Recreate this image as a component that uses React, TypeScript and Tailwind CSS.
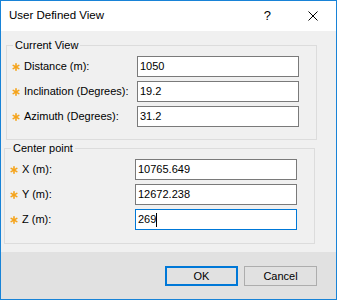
import React from 'react';

const FONT = { fontFamily: '"Liberation Sans", Arial, sans-serif' };

type Field = { label: string; value: string; focused?: boolean };

const CURRENT_VIEW: Field[] = [
  { label: 'Distance (m):', value: '1050' },
  { label: 'Inclination (Degrees):', value: '19.2' },
  { label: 'Azimuth (Degrees):', value: '31.2' },
];

const CENTER_POINT: Field[] = [
  { label: 'X (m):', value: '10765.649' },
  { label: 'Y (m):', value: '12672.238' },
  { label: 'Z (m):', value: '269', focused: true },
];

function RequiredMark() {
  return (
    <svg width="8" height="8" viewBox="0 0 8 8" className="shrink-0">
      <g stroke="#f5a31a" strokeWidth="1.6" strokeLinecap="round">
        <line x1="4" y1="0.8" x2="4" y2="7.2" />
        <line x1="1.2" y1="2.4" x2="6.8" y2="5.6" />
        <line x1="1.2" y1="5.6" x2="6.8" y2="2.4" />
      </g>
    </svg>
  );
}

function Row({ label, value, focused }: Field) {
  return (
    <div className="flex items-center h-[21px]">
      <div className="w-[130px] flex items-center pl-[5px]">
        <RequiredMark />
        <span className="ml-[4px] text-[11px] text-black leading-none whitespace-nowrap">{label}</span>
      </div>
      <div
        className={`w-[162px] h-[21px] flex items-center bg-white px-[2px] text-[11px] text-black border ${
          focused ? 'border-[#0078d7]' : 'border-[#7a7a7a]'
        }`}>
        <span className="leading-none">{value}</span>
        {focused && <span className="w-px h-[14px] bg-black" />}
      </div>
    </div>
  );
}

function Group({ title, fields, className }: { title: string; fields: Field[]; className: string }) {
  return (
    <div className={`relative border border-[#dcdcdc] w-[311px] ${className}`}>
      {/* legend sits over the top border */}
      <span className="absolute left-[6px] top-[-8px] px-[2px] bg-[#f0f0f0] text-[11px] leading-[14px] text-black whitespace-nowrap">
        {title}
      </span>
      <div className="flex flex-col gap-[4px]">
        {fields.map((f) => (
          <Row key={f.label} {...f} />
        ))}
      </div>
    </div>
  );
}

export default function App() {
  return (
    <div className="w-[338px] h-[300px] bg-white" style={FONT}>
      <div className="w-[337px] h-[300px] border border-[#1883d7] flex flex-col">
        {/* Title bar */}
        <div className="h-[30px] bg-white flex items-center shrink-0">
          <span className="ml-[8px] text-[11.5px] text-black">User Defined View</span>
          <span className="ml-auto text-[13px] text-black mr-[37px]">?</span>
          <svg width="10" height="10" viewBox="0 0 10 10" className="mr-[18px]">
            <g stroke="#000" strokeWidth="1">
              <line x1="0.5" y1="0.5" x2="9.5" y2="9.5" />
              <line x1="9.5" y1="0.5" x2="0.5" y2="9.5" />
            </g>
          </svg>
        </div>

        {/* Body */}
        <div className="flex-1 bg-[#f0f0f0] flex flex-col pt-[14px]">
          <Group title="Current View" fields={CURRENT_VIEW} className="ml-[5px] h-[95px] pt-[10px]" />
          <Group title="Center point" fields={CENTER_POINT} className="ml-[3px] mt-[8px] h-[96px] pt-[10px]" />
        </div>

        {/* Footer */}
        <div className="h-[47px] bg-[#e1e1e1] flex items-start justify-end pt-[14px] pr-[19px] shrink-0">
          <button className="w-[73px] h-[20px] bg-[#e1e1e1] border-2 border-[#0078d7] text-[11px] text-black leading-none">
            OK
          </button>
          <button className="ml-[6px] w-[73px] h-[20px] bg-[#e1e1e1] border border-[#adadad] text-[11px] text-black leading-none">
            Cancel
          </button>
        </div>
      </div>
    </div>
  );
}
